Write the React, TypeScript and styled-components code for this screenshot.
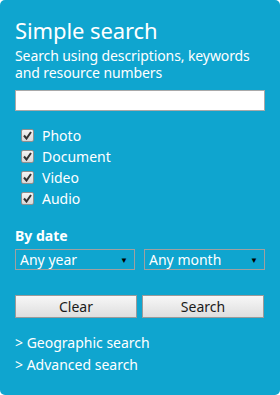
import React from "react";
import styled, { createGlobalStyle } from "styled-components";

const Global = createGlobalStyle`
  html, body { margin: 0; padding: 0; background: #ffffff; }
  * { box-sizing: border-box; }
`;

const Panel = styled.div`
  width: 280px;
  height: 395px;
  background: #0fa5cf;
  border-radius: 5px;
  padding: 16px 15px 0 15px;
  color: #ffffff;
  font-family: "Noto Sans", "Open Sans", sans-serif;
  display: flex;
  flex-direction: column;
`;

const Title = styled.h1`
  margin: 0;
  font-size: 22px;
  font-weight: 400;
  line-height: 28px;
  letter-spacing: -0.1px;
`;

const Subtitle = styled.p`
  margin: 3px 0 0 0;
  font-size: 14px;
  line-height: 17px;
  letter-spacing: -0.1px;
`;

const TextInput = styled.input`
  margin-top: 9px;
  width: 250px;
  height: 21px;
  border: 1px solid #a9a9a9;
  background: #ffffff;
  padding: 0 3px;
  outline: none;
`;

const CheckList = styled.div`
  margin-top: 14px;
  padding-left: 6px;
  display: flex;
  flex-direction: column;
`;

const CheckRow = styled.label`
  display: flex;
  align-items: center;
  height: 21px;
  font-size: 14px;
  gap: 8px;
`;

const Box = styled.span`
  width: 13px;
  height: 13px;
  border: 1px solid #8f8f8f;
  border-radius: 2px;
  background: linear-gradient(#f4f4f4, #d8d8d8);
  display: flex;
  align-items: center;
  justify-content: center;
`;

const SectionLabel = styled.div`
  margin-top: 18px;
  font-size: 14px;
  font-weight: 700;
  line-height: 18px;
`;

const SelectRow = styled.div`
  margin-top: 4px;
  display: flex;
  gap: 9px;
`;

const Select = styled.div<{ $w: number }>`
  width: ${(p) => p.$w}px;
  height: 21px;
  border: 1px solid #a0a0a0;
  display: flex;
  align-items: center;
  justify-content: space-between;
  padding: 0 6px 0 4px;
  font-size: 14px;
`;

const Arrow = styled.span`
  color: #000000;
  font-size: 8px;
  line-height: 1;
`;

const ButtonRow = styled.div`
  margin-top: 25px;
  display: flex;
  gap: 5px;
`;

const Button = styled.button`
  width: 122px;
  height: 23px;
  border: 1px solid #9a9a9a;
  background: linear-gradient(#f7f7f7, #dedede);
  color: #1a1a1a;
  font-family: "Noto Sans", "Open Sans", sans-serif;
  font-size: 14px;
  padding: 0;
`;

const Links = styled.div`
  margin-top: 14px;
  display: flex;
  flex-direction: column;
`;

const LinkItem = styled.a`
  color: #ffffff;
  text-decoration: none;
  font-size: 14px;
  line-height: 22px;
`;

const Check = () => (
  <Box>
    <svg width="9" height="9" viewBox="0 0 9 9">
      <path d="M1 4.5 L3.5 7.5 L8 1" stroke="#333" strokeWidth="2" fill="none" />
    </svg>
  </Box>
);

export default function App() {
  const types = ["Photo", "Document", "Video", "Audio"];
  return (
    <>
      <Global />
      <Panel>
        <Title>Simple search</Title>
        <Subtitle>
          Search using descriptions, keywords
          <br />
          and resource numbers
        </Subtitle>
        <TextInput type="text" />
        <CheckList>
          {types.map((t) => (
            <CheckRow key={t}>
              <Check />
              {t}
            </CheckRow>
          ))}
        </CheckList>
        <SectionLabel>By date</SectionLabel>
        <SelectRow>
          <Select $w={120}>
            Any year<Arrow>▼</Arrow>
          </Select>
          <Select $w={121}>
            Any month<Arrow>▼</Arrow>
          </Select>
        </SelectRow>
        <ButtonRow>
          <Button>Clear</Button>
          <Button>Search</Button>
        </ButtonRow>
        <Links>
          <LinkItem href="#">&gt; Geographic search</LinkItem>
          <LinkItem href="#">&gt; Advanced search</LinkItem>
        </Links>
      </Panel>
    </>
  );
}
